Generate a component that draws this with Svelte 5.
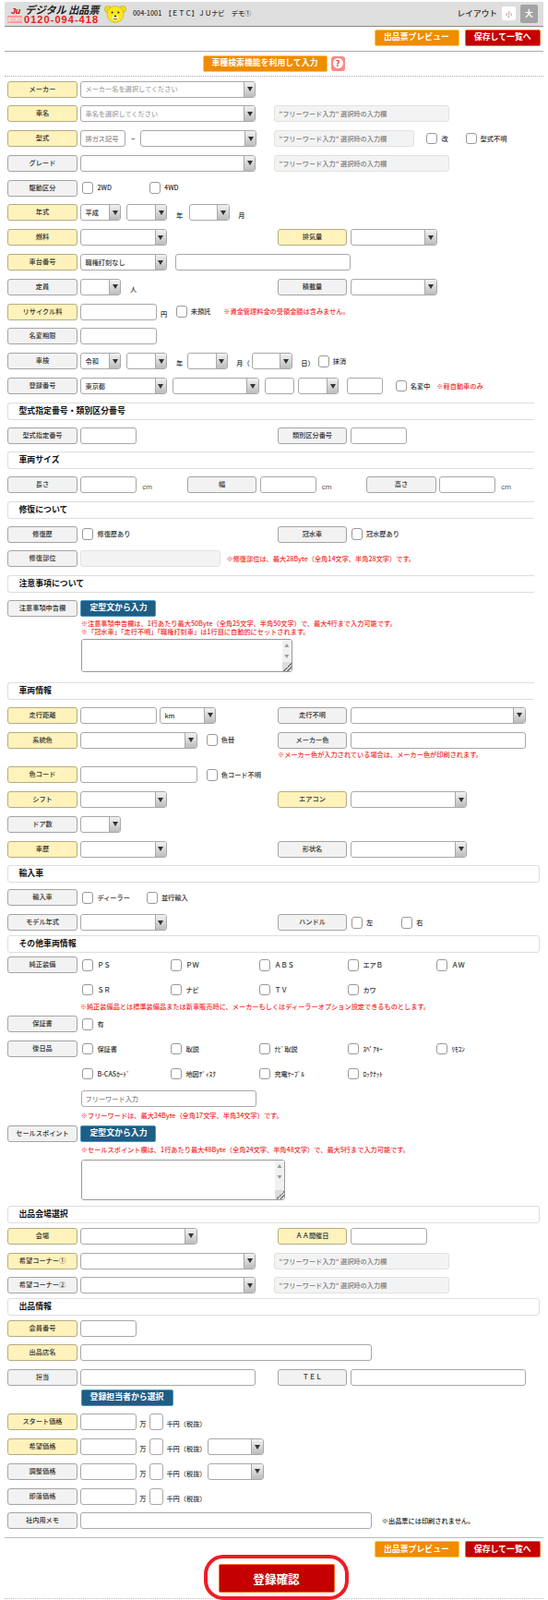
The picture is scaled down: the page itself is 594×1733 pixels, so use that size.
<script>
	const equipment = ['ＰＳ', 'ＰＷ', 'ＡＢＳ', 'エアＢ', 'ＡＷ', 'ＳＲ', 'ナビ', 'ＴＶ', 'カワ'];
	const later = ['保証書', '取説', 'ﾅﾋﾞ取説', 'ｽﾍﾟｱｷｰ', 'ﾘﾓｺﾝ', 'B-CASｶｰﾄﾞ', '地図ﾃﾞｨｽｸ', '充電ｹｰﾌﾞﾙ', 'ﾛｯｸﾅｯﾄ'];
	const prices = [
		{ name: 'スタート価格', req: true, pick: false },
		{ name: '希望価格', req: true, pick: true },
		{ name: '調整価格', req: false, pick: true },
		{ name: '即落価格', req: false, pick: false }
	];
	const free = '"フリーワード入力" 選択時の入力欄';
</script>

{#snippet tag(text, req = false)}
	<span class="tag" class:req>{text}</span>
{/snippet}

{#snippet sel(w, text = '', muted = false)}
	<span class="sel {w}">
		<select class:muted>
			<option>{text}</option>
		</select>
		<span class="arrow"><i></i></span>
	</span>
{/snippet}

{#snippet chk(text, cls = '')}
	<label class="chk {cls}"><input type="checkbox" /><span>{text}</span></label>
{/snippet}

{#snippet actions()}
	<button type="button" class="btn orange">出品票プレビュー</button>
	<button type="button" class="btn red">保存して一覧へ</button>
{/snippet}

{#snippet scrolled(cls)}
	<div class="memo {cls}">
		<textarea></textarea>
		<div class="bar"><span>▲</span><span>▼</span><em></em></div>
	</div>
{/snippet}

<div class="page">
	<header class="head">
		<div class="logo">
			<div class="logo-top"><b>Ju</b><span>デジタル 出品票</span></div>
			<div class="logo-tel"><i>通話無料</i><strong>0120-094-418</strong></div>
		</div>
		<svg class="bear" viewBox="0 0 24 20" aria-hidden="true">
			<circle cx="4" cy="5" r="3.6" fill="#f5dc14" stroke="#b59c10" stroke-width=".5" />
			<circle cx="20" cy="5" r="3.6" fill="#f5dc14" stroke="#b59c10" stroke-width=".5" />
			<ellipse cx="12" cy="10.5" rx="9" ry="9" fill="#fbe61c" stroke="#b59c10" stroke-width=".5" />
			<circle cx="8.6" cy="8.6" r="1" fill="#222" />
			<circle cx="15.4" cy="8.6" r="1" fill="#222" />
			<ellipse cx="12" cy="14" rx="3.6" ry="3" fill="#f7efb0" />
			<ellipse cx="12" cy="12.4" rx="1.2" ry=".9" fill="#222" />
			<path d="M10 15.2q2 1.8 4 0" fill="#c8443a" stroke="#6b3b10" stroke-width=".4" />
		</svg>
		<div class="who">004-1001　【ＥＴＣ】ＪＵナビ　デモ①</div>
		<div class="layout">
			<span>レイアウト</span>
			<button type="button" class="small">小</button>
			<button type="button" class="large">大</button>
		</div>
	</header>

	<div class="bar-top">{@render actions()}</div>

	<div class="search">
		<button type="button" class="btn orange wide">車種検索機能を利用して入力</button>
		<span class="help"><b>?</b></span>
	</div>

	<main>
		<div class="row">
			{@render tag('メーカー', true)}
			{@render sel('w190', 'メーカー名を選択してください', true)}
		</div>
		<div class="row">
			<div class="half">
				{@render tag('車名', true)}
				{@render sel('w190', '車名を選択してください', true)}
			</div>
			<input class="input off w190 pull" disabled placeholder={free} />
		</div>
		<div class="row">
			<div class="half">
				{@render tag('型式', true)}
				<input class="input w49" placeholder="排ガス記号" />
				<span class="dash">−</span>
				{@render sel('w126')}
			</div>
			<input class="input off w152 pull" disabled placeholder={free} />
			{@render chk('改', 'm13')}
			{@render chk('型式不明', 'm19')}
		</div>
		<div class="row">
			<div class="half">
				{@render tag('グレード')}
				{@render sel('w190')}
			</div>
			<input class="input off w190 pull" disabled placeholder={free} />
		</div>
		<div class="row">
			{@render tag('駆動区分')}
			{@render chk('2WD', 'm2')}
			{@render chk('4WD', 'm41')}
		</div>
		<div class="row">
			{@render tag('年式', true)}
			{@render sel('w44', '平成')}
			{@render sel('w44 m6')}
			<span class="unit">年</span>
			{@render sel('w44')}
			<span class="unit">月</span>
		</div>
		<div class="row">
			<div class="half">
				{@render tag('燃料', true)}
				{@render sel('w94')}
			</div>
			{@render tag('排気量', true)}
			{@render sel('w94')}
		</div>
		<div class="row">
			{@render tag('車台番号', true)}
			{@render sel('w94', '職権打刻なし')}
			<input class="input w190 m9" />
		</div>
		<div class="row">
			<div class="half">
				{@render tag('定員')}
				{@render sel('w44')}
				<span class="unit">人</span>
			</div>
			{@render tag('積載量')}
			{@render sel('w94')}
		</div>
		<div class="row">
			{@render tag('リサイクル料', true)}
			<input class="input w83" />
			<span class="unit tight-unit">円</span>
			{@render chk('未預託')}
			<span class="note m14">※資金管理料金の受領金額は含みません。</span>
		</div>
		<div class="row">
			{@render tag('名変期限')}
			<input class="input w83" />
		</div>
		<div class="row">
			{@render tag('車検')}
			{@render sel('w44', '令和')}
			{@render sel('w44 m6')}
			<span class="unit near">年</span>
			{@render sel('w44')}
			<span class="unit paren">月（</span>
			{@render sel('w44')}
			<span class="unit paren2">日）</span>
			{@render chk('抹消')}
		</div>
		<div class="row">
			{@render tag('登録番号')}
			{@render sel('w94', '東京都')}
			{@render sel('w94 m6')}
			<input class="input w33 m6" />
			{@render sel('w44 m4')}
			<input class="input w38 m9" />
			{@render chk('名変中', 'm14')}
			<span class="note m7">※軽自動車のみ</span>
		</div>

		<h3 class="section open">型式指定番号・類別区分番号</h3>
		<div class="row">
			<div class="half">
				{@render tag('型式指定番号')}
				<input class="input w61" />
			</div>
			{@render tag('類別区分番号')}
			<input class="input w61" />
		</div>

		<h3 class="section open">車両サイズ</h3>
		<div class="row">
			{@render tag('長さ')}
			<input class="input w61" />
			<span class="unit cm">cm</span>
			{@render tag('幅')}
			<input class="input w61" />
			<span class="unit cm">cm</span>
			{@render tag('高さ')}
			<input class="input w61" />
			<span class="unit cm">cm</span>
		</div>

		<h3 class="section open">修復について</h3>
		<div class="row">
			<div class="half">
				{@render tag('修復歴')}
				{@render chk('修復歴あり', 'm2')}
			</div>
			{@render tag('冠水車')}
			{@render chk('冠水歴あり', 'm1')}
		</div>
		<div class="row">
			{@render tag('修復部位')}
			<input class="input off w152" disabled />
			<span class="note m6">※修復部位は、最大28Byte（全角14文字、半角28文字）です。</span>
		</div>

		<h3 class="section open">注意事項について</h3>
		<div class="row flush">
			{@render tag('注意事項申告欄')}
			<button type="button" class="btn blue">定型文から入力</button>
		</div>
		<p class="note block">※注意事項申告欄は、1行あたり最大50Byte（全角25文字、半角50文字）で、最大4行まで入力可能です。</p>
		<p class="note block">※「冠水車」「走行不明」「職権打刻車」は1行目に自動的にセットされます。</p>
		{@render scrolled('caution')}

		<h3 class="section open">車両情報</h3>
		<div class="row">
			<div class="half">
				{@render tag('走行距離', true)}
				<input class="input w83" />
				{@render sel('w61 m3', 'km')}
			</div>
			{@render tag('走行不明')}
			{@render sel('w190')}
		</div>
		<div class="row flush">
			<div class="half">
				{@render tag('系統色', true)}
				{@render sel('w126')}
				{@render chk('色替', 'm10')}
			</div>
			{@render tag('メーカー色')}
			<input class="input w190" />
		</div>
		<p class="note block rightnote">※メーカー色が入力されている場合は、メーカー色が印刷されます。</p>
		<div class="row">
			{@render tag('色コード', true)}
			<input class="input w126" />
			{@render chk('色コード不明', 'm10')}
		</div>
		<div class="row">
			<div class="half">
				{@render tag('シフト', true)}
				{@render sel('w94')}
			</div>
			{@render tag('エアコン', true)}
			{@render sel('w126')}
		</div>
		<div class="row">
			{@render tag('ドア数')}
			{@render sel('w44')}
		</div>
		<div class="row lean">
			<div class="half">
				{@render tag('車歴', true)}
				{@render sel('w94')}
			</div>
			{@render tag('形状名')}
			{@render sel('w126')}
		</div>

		<h3 class="section">輸入車</h3>
		<div class="row">
			{@render tag('輸入車')}
			{@render chk('ディーラー', 'm2')}
			{@render chk('並行輸入', 'm18')}
		</div>
		<div class="row close">
			<div class="half">
				{@render tag('モデル年式')}
				{@render sel('w94')}
			</div>
			{@render tag('ハンドル')}
			{@render chk('左', 'm1')}
			{@render chk('右', 'm31')}
		</div>

		<h3 class="section near-next">その他車両情報</h3>
		<div class="row tall flush">
			{@render tag('純正装備')}
			<div class="checks">
				{#each equipment as item}
					{@render chk(item)}
				{/each}
			</div>
		</div>
		<p class="note block extra">※純正装備品とは標準装備品または新車販売時に、メーカーもしくはディーラーオプション設定できるものとします。</p>
		<div class="row">
			{@render tag('保証書')}
			{@render chk('有', 'm2')}
		</div>
		<div class="row tall">
			{@render tag('後日品')}
			<div class="checks">
				{#each later as item}
					{@render chk(item)}
				{/each}
			</div>
		</div>
		<div class="sub"><input class="input w190" placeholder="フリーワード入力" /></div>
		<p class="note block word">※フリーワードは、最大34Byte（全角17文字、半角34文字）です。</p>
		<div class="row flush">
			{@render tag('セールスポイント')}
			<button type="button" class="btn blue">定型文から入力</button>
		</div>
		<p class="note block sales">※セールスポイント欄は、1行あたり最大48Byte（全角24文字、半角48文字）で、最大5行まで入力可能です。</p>
		{@render scrolled('points')}

		<h3 class="section near-next">出品会場選択</h3>
		<div class="row">
			<div class="half">
				{@render tag('会場', true)}
				{@render sel('w126')}
			</div>
			{@render tag('ＡＡ開催日', true)}
			<input class="input w83" />
		</div>
		<div class="row">
			<div class="half">
				{@render tag('希望コーナー①', true)}
				{@render sel('w190')}
			</div>
			<input class="input off w190 pull" disabled placeholder={free} />
		</div>
		<div class="row close">
			<div class="half">
				{@render tag('希望コーナー②')}
				{@render sel('w190')}
			</div>
			<input class="input off w190 pull" disabled placeholder={free} />
		</div>

		<h3 class="section near-next">出品情報</h3>
		<div class="row">
			{@render tag('会員番号', true)}
			<input class="input w61" />
		</div>
		<div class="row">
			{@render tag('出品店名', true)}
			<input class="input w316" />
		</div>
		<div class="row owner">
			<div class="half">
				{@render tag('担当')}
				<input class="input w190" />
			</div>
			{@render tag('ＴＥＬ')}
			<input class="input w190" />
		</div>
		<div class="sub pick-owner"><button type="button" class="btn blue long">登録担当者から選択</button></div>

		{#each prices as price}
			<div class="row">
				{@render tag(price.name, price.req)}
				<input class="input w61" />
				<span class="unit man">万</span>
				<input class="input w14" />
				<span class="unit sen">千円（税抜）</span>
				{#if price.pick}
					{@render sel('w61')}
				{/if}
			</div>
		{/each}
		<div class="row memo-row">
			{@render tag('社内用メモ')}
			<input class="input w316" />
			<span class="plain">※出品票には印刷されません。</span>
		</div>
	</main>

	<footer>
		<div class="bar-bottom">{@render actions()}</div>
		<div class="confirm">
			<div class="ring"><button type="button" class="submit">登録確認</button></div>
		</div>
	</footer>
</div>

<style>
	:global(body) {
		margin: 0;
		background: #fff;
		overflow: hidden;
	}

	.page {
		width: 594px;
		height: 1733px;
		overflow: hidden;
		font-family: 'Noto Sans CJK JP', 'Noto Sans', sans-serif;
		font-size: 7.2px;
		font-weight: 500;
		color: #333;
		line-height: 1.2;
	}

	main {
		display: flex;
		flex-direction: column;
	}

	.head {
		display: flex;
		align-items: center;
		box-sizing: border-box;
		height: 26.5px;
		margin: 2px 5px 0;
		padding: 0 6px 0 3px;
		background: #dedede;
		border-bottom: 1px solid #8a8a8a;
	}

	.logo {
		width: 104px;
	}

	.logo-top {
		display: flex;
		align-items: baseline;
		padding-left: 4px;
		height: 12px;
		line-height: 12px;
		font-style: italic;
		font-weight: 700;
		font-size: 11.4px;
		letter-spacing: -0.2px;
		color: #222;
		white-space: nowrap;
	}

	.logo-top b {
		width: 15px;
		color: #d40000;
		font: italic 900 9px 'Liberation Sans', sans-serif;
	}

	.logo-tel {
		display: flex;
		align-items: center;
		height: 10px;
		white-space: nowrap;
	}

	.logo-tel i {
		flex: none;
		width: 16px;
		height: 8px;
		margin-right: 2px;
		background: #f59a9a;
		color: #fff;
		font-style: normal;
		font-size: 4px;
		line-height: 8px;
		text-align: center;
		overflow: hidden;
	}

	.logo-tel strong {
		font: 700 11px 'Liberation Sans', sans-serif;
		letter-spacing: 1.05px;
		color: #e62020;
	}

	.bear {
		width: 24px;
		height: 20px;
		margin-left: 1px;
		flex: none;
	}

	.who {
		margin-left: 7px;
		font-size: 7.2px;
		color: #333;
		white-space: nowrap;
	}

	.layout {
		display: flex;
		align-items: center;
		margin-left: auto;
		font-size: 8.7px;
		color: #333;
		white-space: nowrap;
	}

	.small,
	.large {
		padding: 0;
		border: 0;
		font-family: inherit;
		text-align: center;
	}

	.small {
		width: 15px;
		height: 15px;
		margin: 0 4.5px 0 5px;
		background: #fff;
		color: #888;
		font-size: 7.2px;
		border-radius: 2px;
	}

	.large {
		width: 19.5px;
		height: 20px;
		background: #a3a3a3;
		color: #fff;
		font-size: 8.7px;
		font-weight: 700;
		border-radius: 2px;
	}

	.bar-top,
	.bar-bottom {
		display: flex;
		justify-content: flex-end;
		gap: 6px;
		margin: 0 5px;
		padding-right: 3px;
	}

	.bar-top {
		box-sizing: border-box;
		height: 27px;
		padding-top: 3px;
		border-bottom: 1px solid #aaa;
	}

	.bar-bottom {
		padding-top: 3px;
		border-top: 1px solid #bbb;
		height: 18px;
		box-sizing: content-box;
	}

	.btn {
		box-sizing: border-box;
		height: 18px;
		padding: 0;
		border-radius: 2px;
		color: #fff;
		font-family: inherit;
		font-weight: 700;
		font-size: 8.9px;
		line-height: 1;
		white-space: nowrap;
	}

	.orange {
		width: 92px;
		background: #f08c00;
		border: 1px solid #ffc94a;
	}

	.red {
		width: 82.5px;
		background: #c40000;
		border: 1px solid #f86a1a;
	}

	.wide {
		width: 135px;
	}

	.blue {
		width: 82px;
		background: #1e5e85;
		border: 1px solid #4a95c4;
	}

	.long {
		width: 100px;
	}

	.search {
		display: flex;
		align-items: center;
		justify-content: center;
		gap: 4px;
		height: 27px;
		padding: 4px 1px 4px 0;
		margin: 0 5px 5px;
		box-sizing: border-box;
		border-bottom: 1px dotted #aaa;
	}

	.help {
		display: flex;
		align-items: center;
		justify-content: center;
		width: 15px;
		height: 16px;
		border-radius: 3px;
		background: #f88;
	}

	.help b {
		width: 11px;
		height: 11px;
		border-radius: 50%;
		background: #fff;
		color: #e33;
		font-size: 9px;
		line-height: 11px;
		text-align: center;
	}

	.row {
		display: flex;
		align-items: center;
		height: 18px;
		margin-bottom: 8.8px;
		padding-left: 8.3px;
		white-space: nowrap;
	}

	.half {
		display: flex;
		align-items: center;
		width: 292.5px;
		flex: none;
		height: 18px;
	}

	.tag {
		flex: none;
		box-sizing: border-box;
		width: 75.4px;
		height: 18px;
		margin-right: 3.8px;
		background: #f2f2f2;
		border: 1px solid #a4a4a4;
		border-bottom-width: 1.5px;
		border-radius: 3px;
		color: #333;
		line-height: 15px;
		text-align: center;
	}

	.tag.req {
		background: #fff2bb;
		border-color: #b5ab82;
	}

	.sel {
		display: inline-flex;
		flex: none;
		box-sizing: border-box;
		height: 18px;
		background: #fff;
		border: 1px solid #a8a8a8;
		border-bottom-width: 1.5px;
		border-radius: 3px;
		overflow: hidden;
	}

	.sel select {
		flex: 1;
		min-width: 0;
		padding: 0 0 0 4px;
		border: 0;
		outline: 0;
		appearance: none;
		background: transparent;
		font: inherit;
		font-size: 7.2px;
		color: #333;
	}

	.sel select.muted {
		color: #a4a4a4;
	}

	.arrow {
		display: flex;
		align-items: center;
		justify-content: center;
		flex: none;
		width: 11.5px;
		background: linear-gradient(#f2f2f2, #bcbcbc);
		border-left: 1px solid #a8a8a8;
	}

	.arrow i {
		width: 0;
		height: 0;
		border: 3px solid transparent;
		border-top: 5px solid #333;
		border-bottom: 0;
	}

	.input {
		flex: none;
		box-sizing: border-box;
		height: 18px;
		padding: 0 4px;
		background: #fff;
		border: 1px solid #a8a8a8;
		border-bottom-width: 1.5px;
		border-radius: 3px;
		outline: 0;
		font: inherit;
		color: #333;
	}

	.input::placeholder {
		color: #888;
		opacity: 1;
	}

	.input.off {
		background: #f3f3f3;
		border: 1px solid #e2e2e2;
	}

	.input.off::placeholder {
		color: #808080;
	}

	.pull {
		margin-left: -3.4px;
	}

	.w14 { width: 14.4px; }
	.w33 { width: 32.6px; }
	.w38 { width: 38.3px; }
	.w44 { width: 44px; }
	.w49 { width: 49px; }
	.w61 { width: 60.8px; }
	.w83 { width: 83px; }
	.w94 { width: 93.7px; }
	.w126 { width: 126.3px; }
	.w152 { width: 152px; }
	.w190 { width: 190px; }
	.w316 { width: 316px; }

	.m1 { margin-left: 1px; }
	.m2 { margin-left: 2px; }
	.m3 { margin-left: 3px; }
	.m4 { margin-left: 4px; }
	.m6 { margin-left: 6px; }
	.m7 { margin-left: 7px; }
	.m9 { margin-left: 9px; }
	.m10 { margin-left: 10px; }
	.m13 { margin-left: 13px; }
	.m14 { margin-left: 14px; }
	.m18 { margin-left: 18px; }
	.m19 { margin-left: 19px; }
	.m31 { margin-left: 31px; }
	.m41 { margin-left: 41px; }

	.dash {
		width: 15.5px;
		flex: none;
		text-align: center;
		color: #555;
		font-size: 8px;
	}

	.unit {
		flex: none;
		padding-top: 5px;
		margin: 0 6.5px 0 9.5px;
		color: #333;
	}

	.tight-unit {
		margin: 0 9.5px 0 3.5px;
	}

	.near {
		margin-right: 5px;
	}

	.paren {
		margin: 0 1.5px 0 9px;
		width: 15px;
	}

	.paren2 {
		margin: 0 3.5px 0 9.5px;
		width: 15px;
	}

	.cm {
		width: 12px;
		margin: 0 36.5px 0 6px;
		color: #555;
		font-family: 'Liberation Sans', sans-serif;
		font-size: 8px;
	}

	.man {
		margin: 0 4px 0 3px;
	}

	.sen {
		margin: 0 1.5px 0 3.5px;
	}

	.chk {
		display: inline-flex;
		align-items: center;
		flex: none;
		gap: 4px;
		color: #333;
	}

	.chk input {
		appearance: none;
		box-sizing: border-box;
		flex: none;
		width: 12px;
		height: 12.5px;
		margin: 0;
		background: #fff;
		border: 1px solid #999;
		border-radius: 3px;
	}

	.note {
		color: #f52c2c;
		flex: none;
	}

	.note.block {
		height: 9px;
		margin: 0 0 0 87.8px;
		line-height: 9px;
		white-space: nowrap;
	}

	.flush {
		margin-bottom: 2.9px;
	}

	.note.rightnote {
		margin: -0.7px 0 8.5px 301px;
	}

	.note.extra {
		margin: 1.7px 0 5.5px 86.7px;
	}

	.note.word {
		margin-top: 4.9px;
		margin-bottom: 6px;
	}

	.note.sales {
		margin-top: 2px;
		margin-bottom: 6px;
	}

	.memo {
		position: relative;
		box-sizing: border-box;
		flex: none;
		margin-left: 87.5px;
		background: #fff;
		border: 1px solid #999;
		border-bottom-width: 1.5px;
		border-radius: 3px;
		overflow: hidden;
	}

	.memo textarea {
		display: block;
		width: 100%;
		height: 100%;
		box-sizing: border-box;
		border: 0;
		outline: 0;
		padding: 2px;
		resize: none;
		overflow: hidden;
	}

	.caution {
		width: 229.2px;
		height: 36px;
		margin-top: 3.5px;
		margin-bottom: 11px;
	}

	.points {
		width: 221.4px;
		height: 44px;
		margin-bottom: 5.8px;
	}

	.bar {
		position: absolute;
		top: 0;
		right: 0;
		bottom: 0;
		display: flex;
		flex-direction: column;
		width: 10px;
		background: #f1f1f1;
		color: #999;
		font-size: 5px;
		line-height: 11px;
		text-align: center;
	}

	.bar em {
		margin-top: auto;
		height: 10px;
		background: linear-gradient(135deg, #ddd 55%, #777 55%, #777 62%, #ddd 62%, #ddd 75%, #777 75%, #777 82%, #ddd 82%);
	}

	.section {
		box-sizing: border-box;
		flex: none;
		width: 576.5px;
		height: 19px;
		margin: 0 0 7.7px 8.3px;
		padding-left: 11.2px;
		background: #fff;
		border: 1px solid #dedede;
		border-bottom-width: 1.5px;
		border-radius: 3px;
		color: #111;
		font-size: 8.9px;
		font-weight: 700;
		line-height: 16.5px;
	}

	.section.open {
		width: 571px;
		border-right: 0;
		border-radius: 3px 0 0 3px;
	}

	.near-next {
		margin-bottom: 4.6px;
	}

	.close {
		margin-bottom: 4.6px;
	}

	.lean {
		margin-bottom: 8px;
	}

	.tall {
		align-items: flex-start;
		height: auto;
	}

	.checks {
		display: grid;
		grid-template-columns: repeat(5, 96px);
		grid-auto-rows: 18px;
		row-gap: 8.8px;
		margin-left: 1.9px;
	}

	.sub {
		display: flex;
		margin-left: 87.5px;
	}

	.owner {
		margin-bottom: 3.3px;
	}

	.pick-owner {
		height: 18px;
		margin-bottom: 8.7px;
	}

	.memo-row {
		margin-bottom: 8.7px;
	}

	.plain {
		flex: none;
		margin-left: 10.3px;
		color: #222;
	}

	.confirm {
		display: flex;
		justify-content: center;
		height: 47px;
		margin: -2.7px 5px 0;
		border-bottom: 1px dotted #bbb;
		padding-left: 5px;
	}

	.ring {
		box-sizing: border-box;
		display: flex;
		width: 157px;
		height: 49px;
		padding: 5.5px 11.5px;
		background: #fff;
		border: 4px solid #ed1c24;
		border-radius: 21px;
		position: relative;
	}

	.submit {
		width: 100%;
		height: 31px;
		padding: 0;
		background: #c40000;
		border: 1px solid #f86a1a;
		border-radius: 2px;
		color: #fff;
		font-family: inherit;
		font-size: 12.6px;
		font-weight: 700;
	}
</style>
